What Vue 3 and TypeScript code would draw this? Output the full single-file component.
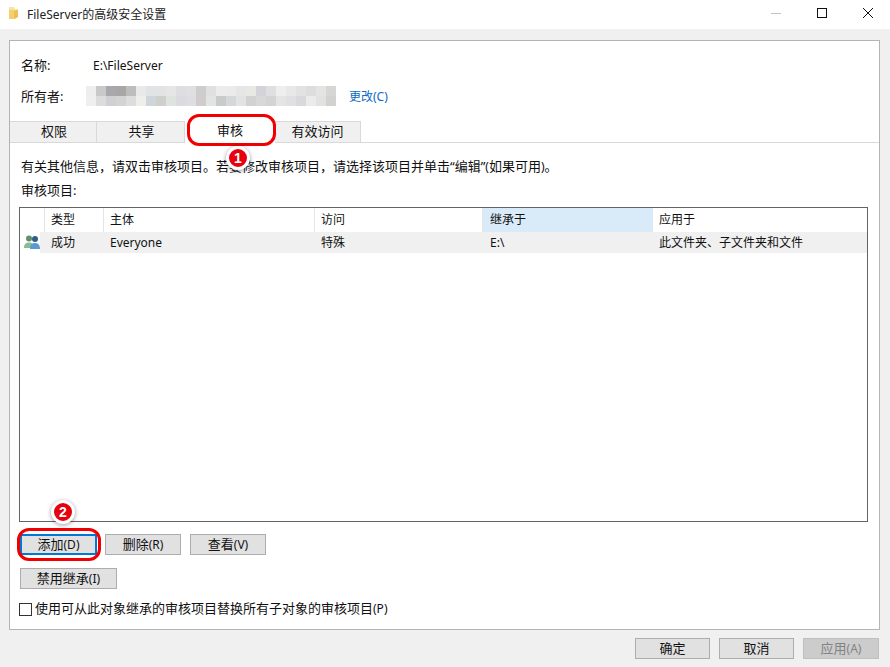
<script setup lang="ts">
const row1 = ['#eeeeee','#c9c9ca','#a9a9ad','#a9a7a5','#bdbdbe','#e9e9e9','#e0e4e4','#e2e3e3','#e6e6e6','#dedee2','#dfe0e2','#cfcdcb','#dfe0e0','#ececec','#ebebeb','#e6e6e6','#e8e8e4','#d4d3da','#dfdfe2','#eeeeee','#e8e8e8','#e2e2e4','#dddddd','#e4e4e4','#d6d6d4']
const row2 = ['#efefef','#dcdcdc','#cfcfd4','#d3d3d3','#dcdede','#eeeeea','#cfd5d8','#cfcfcc','#dfe3df','#dadae0','#dedee2','#cfcccb','#e2e3e3','#c9cbcb','#d5d8d8','#e3e3e3','#d2d2d2','#d8d8d8','#d4d4d4','#e4e4e4','#dfdfe4','#d9d9dc','#ebebeb','#e2e2e2','#d2d2d0']
const cells = [...row1, ...row2]
const tabs = [
  { label: '权限', cls: 'tab-a' },
  { label: '共享', cls: 'tab-b' },
  { label: '审核', cls: 'tab-c active' },
  { label: '有效访问', cls: 'tab-d' },
]
const cols = [
  { label: '', cls: 'c0' },
  { label: '类型', cls: 'c1' },
  { label: '主体', cls: 'c2' },
  { label: '访问', cls: 'c3' },
  { label: '继承于', cls: 'c4 sorted' },
  { label: '应用于', cls: 'c5' },
]
</script>

<template>
  <div class="win">
    <header class="titlebar">
      <svg class="folder" width="9" height="12" viewBox="0 0 9 12">
        <path d="M0 0h5l1 2h3v8l-4 2H0z" fill="#f8e3a0" />
        <path d="M0 3h9v7l-4 2H0z" fill="#f4cf6e" />
        <path d="M5 4.500l4-1.500v7l-4 2z" fill="#eebf50" />
      </svg>
      <span class="title">FileServer的高级安全设置</span>
      <div class="controls">
        <svg width="12" height="12" viewBox="0 0 12 12"><path d="M1 6.500h10" stroke="#c4c4c4" fill="none" /></svg>
        <svg width="12" height="12" viewBox="0 0 12 12"><rect x="1.500" y="1.500" width="9" height="9" stroke="#111" fill="none" /></svg>
        <svg width="12" height="12" viewBox="0 0 12 12"><path d="M1 1l10 10M11 1L1 11" stroke="#111" fill="none" /></svg>
      </div>
    </header>

    <main class="panel">
      <div class="info-row name-row">
        <span class="info-label big">名称:</span>
        <span>E:\FileServer</span>
      </div>
      <div class="info-row owner-row">
        <span class="info-label big">所有者:</span>
        <div class="mosaic">
          <i v-for="(c, i) in cells" :key="i" :style="{ background: c }"></i>
        </div>
        <a class="link">更改(C)</a>
      </div>

      <nav class="tabs">
        <div v-for="t in tabs" :key="t.label" class="tab" :class="t.cls">{{ t.label }}</div>
      </nav>

      <section class="content">
        <p class="hint">有关其他信息，请双击审核项目。若要修改审核项目，请选择该项目并单击“编辑”<span class="lat">(</span>如果可用<span class="lat">)</span>。</p>
        <p class="list-label">审核项目:</p>

        <div class="table">
          <div class="thead">
            <div v-for="c in cols" :key="c.cls" class="th" :class="c.cls">{{ c.label }}</div>
          </div>
          <div class="tr">
            <div class="td c0">
              <svg width="16" height="14" viewBox="0 0 16 14">
                <circle cx="5" cy="3.500" r="3" fill="#5f8f70" />
                <path d="M0 13c0-4 1.800-5.500 5-5.500s5 1.500 5 5.500z" fill="#8dbb93" />
                <circle cx="11" cy="4" r="3" fill="#2f5f86" />
                <path d="M6 14c0-4 1.800-6 5-6s5 2 5 6z" fill="#5a9ad0" />
              </svg>
            </div>
            <div class="td c1">成功</div>
            <div class="td c2">Everyone</div>
            <div class="td c3">特殊</div>
            <div class="td c4">E:\</div>
            <div class="td c5">此文件夹、子文件夹和文件</div>
          </div>
        </div>

        <div class="btn-row first">
          <button class="btn focused">添加<span class="lat">(D)</span></button>
          <button class="btn">删除<span class="lat">(R)</span></button>
          <button class="btn">查看<span class="lat">(V)</span></button>
        </div>
        <div class="btn-row second">
          <button class="btn wide">禁用继承<span class="lat">(I)</span></button>
        </div>
        <label class="check">
          <span class="box"></span>
          <span class="check-text">使用可从此对象继承的审核项目替换所有子对象的审核项目<span class="lat">(P)</span></span>
        </label>
      </section>
    </main>

    <footer class="footer">
      <button class="btn foot">确定</button>
      <button class="btn foot">取消</button>
      <button class="btn foot disabled">应用<span class="lat">(A)</span></button>
    </footer>

    <div class="mark mark-tab"></div>
    <div class="mark mark-add"></div>
    <div class="badge badge-1">1</div>
    <div class="badge badge-2">2</div>
  </div>
</template>

<style scoped>
.win {
  position: relative;
  width: 890px;
  height: 667px;
  overflow: hidden;
  background: #f0f0f0;
  color: #111;
  font: 12px/17px "Noto Sans", "Noto Sans CJK SC", sans-serif;
}
.lat { font-size: 12px; }
.big { font-size: 13px; }
.titlebar {
  height: 29px;
  background: #fff;
  display: flex;
  align-items: center;
  padding-left: 9px;
}
.folder { margin-right: 9px; margin-top: -3px; }
.title { color: #222; margin-top: -1px; }
.controls {
  margin-left: auto;
  display: flex;
  gap: 34px;
  padding-right: 16px;
  margin-top: -3px;
}
.panel {
  margin: 11px 0 0 9px;
  width: 871px;
  height: 590px;
  box-sizing: border-box;
  border: 1px solid #b4b4b4;
  background: #fff;
}
.info-row { display: flex; align-items: center; margin-left: 11px; }
.name-row { margin-top: 16px; height: 17px; }
.owner-row { margin-top: 12px; height: 20px; }
.info-label { width: 72px; }
.owner-row .info-label { width: 65px; }
.mosaic {
  display: grid;
  grid-template-columns: repeat(25, 10px);
  grid-auto-rows: 10px;
  width: 250px;
  height: 20px;
}
.mosaic i { display: block; }
.link { margin-left: 13px; color: #0a6cc4; }
.tabs {
  display: flex;
  align-items: flex-end;
  margin-top: 15px;
  height: 21px;
  border-bottom: 1px solid #d9d9d9;
  font-size: 13px;
}
.tab {
  box-sizing: border-box;
  height: 21px;
  border: 1px solid #d9d9d9;
  border-bottom: none;
  border-left: none;
  background: #f0f0f0;
  text-align: center;
  line-height: 19px;
}
.tab-a { width: 87px; padding-left: 2px; }
.tab-b { width: 88px; padding-left: 2px; }
.tab-c { width: 90px; background: #fff; height: 24px; margin: 0 0 -1px 0; border: none; line-height: 22px; }
.tab-d { width: 86px; }
.content { padding: 0 0 0 9px; }
.hint { margin: 15px 0 0 2px; line-height: 17px; font-size: 13px; }
.list-label { margin: 7px 0 0 2px; line-height: 17px; font-size: 13px; }
.table {
  margin-top: 8px;
  width: 849px;
  height: 315px;
  box-sizing: border-box;
  border: 1px solid #646464;
  background: #fff;
}
.thead, .tr { display: flex; }
.thead { height: 24px; }
.tr { height: 21px; background: #f0f0f0; margin-left: 20px; }
.th { box-sizing: border-box; border-right: 1px solid #e5e5e5; padding-left: 6px; line-height: 24px; }
.td { box-sizing: border-box; padding-left: 6px; line-height: 21px; }
.c0 { width: 25px; padding: 0; }
.c1 { width: 59px; }
.c2 { width: 211px; }
.c3 { width: 168px; }
.c4 { width: 170px; padding-left: 7px; }
.c5 { width: 214px; border-right: none; }
.sorted { background: #d9ebf9; border-right: none; }
.tr .c0 { width: 5px; position: relative; overflow: visible; }
.tr .c0 svg { position: absolute; left: -16px; top: 3px; }
.btn {
  box-sizing: border-box;
  height: 21px;
  width: 76px;
  padding: 0;
  border: 1px solid #adadad;
  background: #e1e1e1;
  color: #111;
  font: inherit;
  font-size: 13px;
  line-height: 17px;
  text-align: center;
}
.btn-row { display: flex; gap: 9px; padding-left: 1px; }
.first { margin-top: 12px; }
.btn.focused { width: 77px; border: 2px solid #0078d7; margin-right: -1px; }
.second { margin-top: 13px; }
.btn.wide { width: 97px; }
.check { display: flex; align-items: center; margin-top: 12px; height: 17px; font-size: 13px; }
.check-text { margin-top: -2px; }
.box {
  width: 13px;
  height: 13px;
  box-sizing: border-box;
  border: 1px solid #333;
  background: #fff;
  margin-right: 3px;
}
.footer { display: flex; justify-content: flex-end; gap: 9px; margin-top: 8px; padding-right: 11px; }
.btn.foot { width: 75px; }
.btn.disabled { width: 76px; background: #cccccc; border-color: #bfbfbf; color: #838383; }
.mark {
  position: absolute;
  box-sizing: border-box;
  border: 3px solid #f00000;
  border-radius: 12px;
}
.mark-tab { left: 187px; top: 114px; width: 89px; height: 32px; }
.mark-add { left: 17px; top: 528px; width: 84px; height: 33px; }
.badge {
  position: absolute;
  width: 24px;
  height: 24px;
  box-sizing: border-box;
  border-radius: 50%;
  background: #e8000f;
  border: 3px solid #fff;
  box-shadow: 0 1px 4px rgba(0, 0, 0, 0.4);
  color: #fff;
  font: 700 14px/18px "Liberation Sans", sans-serif;
  text-align: center;
}
.badge-1 { left: 226px; top: 146px; }
.badge-2 { left: 51px; top: 500px; }
</style>
